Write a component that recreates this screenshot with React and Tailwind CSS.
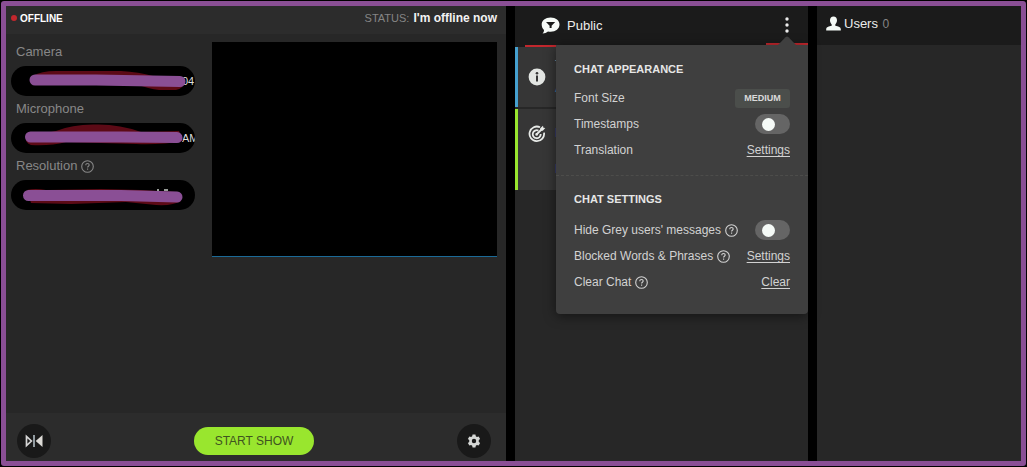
import { useState } from "react"

const messages = [
    {
        id: 'info', icon: InfoIcon, box: 'border-[#45a0cf] h-[60px] pt-[11px]',
        lines: [
            { text: 'T', style: 'text-[#a5a5a5] leading-[14px]' },
            { text: 'A', style: 'text-[#2f7fa8] leading-[32px]' },
        ],
    },
    {
        id: 'goal', icon: GoalIcon, box: 'border-[#99e62e] h-[81px] pt-[6px]',
        lines: [
            { text: 'E', style: 'text-[#5c5cae] leading-[36px]' },
            { text: 'E', style: 'text-[#5c5cae] leading-[36px]' },
        ],
    },
]

function HelpIcon() {
    return (
        <svg viewBox="0 0 13 13" className="w-[13px] h-[13px] shrink-0" fill="none" stroke="currentColor" strokeWidth="1.1">
            <circle cx="6.5" cy="6.5" r="5.8" />
            <path d="M4.8 5.2c0-1 .7-1.7 1.7-1.7s1.7.6 1.7 1.5c0 1.2-1.6 1.2-1.6 2.5" />
            <path d="M6.6 8.6v1.2" />
        </svg>
    )
}

function BubbleIcon() {
    return (
        <svg viewBox="0 0 19 17" className="w-[19px] h-[17px]">
            <path fill="#f7fbf8" d="M9.6.5C14.8.5 18.5 3.4 18.5 7.6s-3.700 7.200-8.900 7.200c-.9 0-1.800-.1-2.600-.3-1.400 1.200-3.300 1.900-5.500 1.900 1-.9 1.500-2.200 1.500-3.500C1.400 11.500.7 9.700.7 7.600.7 3.400 4.400.5 9.600.5z" />
            <path fill="#1b1b1b" d="M5 5h9.200l-3.600 3.700v2.300h-2V8.700z" />
        </svg>
    )
}

function InfoIcon() {
    return (
        <svg viewBox="0 0 18 18" className="w-[18px] h-[18px]">
            <circle cx="9" cy="9" r="8.400" fill="#e2e5e2" />
            <circle cx="9" cy="5.300" r="1.300" fill="#363636" />
            <path d="M8 7.600h2v5.800H8z" fill="#363636" />
        </svg>
    )
}

function GoalIcon() {
    return (
        <svg viewBox="0 0 18 18" className="w-[18px] h-[18px]" fill="none" stroke="#e8ebe8" strokeWidth="1.800">
            <path d="M12 2.300A7.300 7.300 0 1 0 16 7.600" />
            <path d="M10.400 5.600A4 4 0 1 0 12.700 9" />
            <path d="M8.500 9.500L13.500 4.500" />
            <path d="M12.200 5.700V3.200L15 .8l.4 1.900 1.900.4-2.500 2.700z" fill="#e8ebe8" stroke="none" />
            <circle cx="8.600" cy="9.400" r="1.300" fill="#e8ebe8" stroke="none" />
        </svg>
    )
}

function UserIcon() {
    return (
        <svg viewBox="0 0 15 15" className="w-[15px] h-[15px]" fill="#f4f9f5">
            <path d="M7.500.5c2.200 0 3.500 1.500 3.500 3.800 0 1.700-.7 3.200-1.700 4.100v1.300c2.900.6 5.500 1.400 5.500 3.300v1.500H.2V13c0-1.900 2.600-2.700 5.500-3.300V8.400C4.700 7.500 4 6 4 4.300 4 2 5.300.5 7.500.5z" />
        </svg>
    )
}

function FlipIcon() {
    return (
        <svg viewBox="0 0 18 14" className="w-[18px] h-[14px]">
            <path d="M1.500 2.400v9.200L6.400 7z" fill="none" stroke="#d6d6d6" strokeWidth="1.700" />
            <path d="M9 1v12" stroke="#a9b4ba" strokeWidth="1.700" />
            <path d="M17.500 1v12L10.700 7z" fill="#dcdad6" />
        </svg>
    )
}

function GearIcon() {
    return (
        <svg viewBox="0 0 24 24" className="w-[14px] h-[14px]" fill="#d5d7d5">
            <path fillRule="evenodd" d="M9.500 1h5l.6 3 1.900 1.100 3-1 2.500 4.300-2.300 2v3.200l2.300 2-2.500 4.300-3-1-1.900 1.100-.6 3h-5l-.6-3L7 18.900l-3 1-2.500-4.300 2.300-2v-3.200l-2.300-2L4 4.100l3 1L8.900 4zM12 8.200a3.800 3.800 0 1 0 0 7.600 3.800 3.800 0 0 0 0-7.600z" />
        </svg>
    )
}

function Device({ id, label, value, help, children }) {
    return (
        <div>
            <label htmlFor={id} className="flex items-center gap-1 pl-[5px] mb-1 text-[13px] leading-5 text-[#878787]">
                {label} {help && <HelpIcon />}
            </label>
            <div className="relative">
                <select id={id} className="block appearance-none w-full h-[30px] pl-[171px] rounded-full bg-black text-[11px] text-[#dddddd]">
                    <option>{value}</option>
                </select>
                <svg viewBox="0 0 184 30" className="absolute inset-0 w-full h-[30px] pointer-events-none">
                    {children}
                </svg>
            </div>
        </div>
    )
}

function Row({ label, help, htmlFor, children }) {
    return (
        <div className="flex items-center justify-between h-[26px]">
            <label htmlFor={htmlFor} className="flex items-center gap-1">
                {label} {help && <HelpIcon />}
            </label>
            {children}
        </div>
    )
}

function Toggle({ id, checked, onChange }) {
    return (
        <input
            id={id}
            type="checkbox"
            checked={checked}
            onChange={(e) => onChange(e.target.checked)}
            className="appearance-none flex items-center w-[35px] h-5 px-[7px] rounded-full bg-[#656565] checked:justify-end before:content-[''] before:w-[13px] before:h-[13px] before:rounded-full before:bg-[#f5faf7]"
        />
    )
}

function ChatMenu() {

    const [timestamps, setTimestamps] = useState(false)
    const [hideGrey, setHideGrey] = useState(false)

    return (
        <div className="absolute right-0 top-[39px] z-10 w-[252px] rounded-b-sm bg-[#3f3f3f] text-xs text-[#d2d2d2] shadow-[0_2px_12px_rgba(0,0,0,0.5)]">
            <svg viewBox="0 0 20 10" className="absolute right-[11px] -top-[9px] w-5 h-[10px]" fill="#3f3f3f">
                <path d="M0 10 8.500 1.200Q10-.3 11.500 1.200L20 10z" />
            </svg>
            <section className="px-[18px] pt-[14px] pb-3 border-b border-dashed border-[#4d4d4b]">
                <h2 className="mb-[6px] text-[11px] leading-5 font-bold text-[#e6e6e6]">CHAT APPEARANCE</h2>
                <Row label="Font Size" htmlFor="font-size">
                    <button id="font-size" className="w-[55px] h-[19px] rounded-[3px] bg-[#4b4e4b] text-[9px] font-bold text-[#dadada]">MEDIUM</button>
                </Row>
                <Row label="Timestamps" htmlFor="timestamps">
                    <Toggle id="timestamps" checked={timestamps} onChange={setTimestamps} />
                </Row>
                <Row label="Translation">
                    <a href="#translation" className="underline underline-offset-2">Settings</a>
                </Row>
            </section>
            <section className="px-[18px] pt-[13px] pb-[19px]">
                <h2 className="mb-2 text-[11px] leading-5 font-bold text-[#e6e6e6]">CHAT SETTINGS</h2>
                <Row label="Hide Grey users' messages" htmlFor="hide-grey" help>
                    <Toggle id="hide-grey" checked={hideGrey} onChange={setHideGrey} />
                </Row>
                <Row label="Blocked Words & Phrases" help>
                    <a href="#blocked" className="underline underline-offset-2">Settings</a>
                </Row>
                <Row label="Clear Chat" help>
                    <a href="#clear" className="underline underline-offset-2">Clear</a>
                </Row>
            </section>
        </div>
    )
}

export default function App() {
    return (
        <div className="min-h-screen flex p-px bg-black font-['Liberation_Sans',Arial,sans-serif]">
            <div className="flex-1 grid grid-cols-[500fr_293fr_204fr] gap-[9px] border-[5px] border-[#8a4f95] rounded-[3px]">

                {/* Broadcast */}
                <main className="flex flex-col min-w-0 bg-[#272727]">
                    <header className="flex items-center justify-between h-7 pl-[5px] pr-[9px] pb-1 bg-[#2c2c2c] text-[11px]">
                        <div className="flex items-center gap-[3px] text-[10px] font-bold text-white">
                            <span className="w-[6px] h-[6px] rounded-full bg-[#c2272d]" />
                            OFFLINE
                        </div>
                        <p className="text-[#858585]">STATUS: <b className="ml-px text-xs text-[#f2f2f2]">I'm offline now</b></p>
                    </header>

                    <div className="flex-1 flex items-start gap-[17px] pt-2 pl-[5px] pr-[9px]">
                        <form className="flex flex-col gap-[3px] w-[184px] shrink-0">
                            <Device id="camera" label="Camera" value="04">
                                <path d="M22 10Q30 5 45 5H110Q128 6 142 10L172 14Q174 22 165 24H148Q138 23 125 18L50 16z" fill="#5c0a16" />
                                <path d="M24 14 85 14 169 15.500" fill="none" stroke="#8a4f95" strokeWidth="11" strokeLinecap="round" />
                            </Device>
                            <Device id="microphone" label="Microphone" value="AM">
                                <path d="M15 14 45 8Q62 1 85 1.500 108 1 130 9L168 8 172 18Q150 22 125 21L55 19Q40 23 20 22 14 20 15 14z" fill="#5c0a16" />
                                <path d="M19.500 14H110L166 14.500" fill="none" stroke="#8a4f95" strokeWidth="11" strokeLinecap="round" />
                            </Device>
                            <Device id="resolution" label="Resolution" value="" help>
                                <path d="M16 10Q24 8 35 10L90 9 130 10 165 12 170 21Q162 26 145 25L115 22 60 24 20 23z" fill="#5c0a16" />
                                <path d="M146 10h2M153 10h4" stroke="#c9cfc9" strokeWidth="1.500" />
                                <path d="M17.500 15.500H110L166 17" fill="none" stroke="#8a4f95" strokeWidth="11" strokeLinecap="round" />
                            </Device>
                        </form>
                        <div className="flex-1 border-b border-[#1b6a97]">
                            <div className="aspect-[4/3] bg-black" />
                        </div>
                    </div>

                    <footer className="flex items-center justify-between h-12 pl-[11px] pr-[15px] pt-[7px] bg-[#2c2c2c]">
                        <button aria-label="Flip video" className="flex items-center justify-center w-[34px] h-[34px] rounded-full bg-[#191919]"><FlipIcon /></button>
                        <button className="w-[120px] h-7 rounded-full bg-[#99e62e] text-xs text-[#3f5420]">START SHOW</button>
                        <button aria-label="Settings" className="flex items-center justify-center w-[34px] h-[34px] rounded-full bg-[#191919]"><GearIcon /></button>
                    </footer>
                </main>

                {/* Chat */}
                <section className="min-w-0 bg-[#272727]">
                    <header className="relative flex justify-between h-[41px] bg-[#1b1b1b]">
                        <button className="flex items-center gap-[7px] ml-[10px] pl-4 pr-3 border-b-2 border-[#c2272d] text-[13px] text-[#ececec]">
                            <BubbleIcon /> Public
                        </button>
                        <button aria-label="Chat menu" className="flex items-center justify-center w-[42px] h-[39px] border-b-2 border-[#c2272d]">
                            <svg viewBox="0 0 4 16" className="w-1 h-4" fill="#ececec">
                                <circle cx="2" cy="2" r="1.700" />
                                <circle cx="2" cy="8" r="1.700" />
                                <circle cx="2" cy="14" r="1.700" />
                            </svg>
                        </button>
                        <ChatMenu />
                    </header>
                    <div className="flex flex-col gap-[2px]">
                        {messages.map((message) => (
                            <div key={message.id} className={`flex gap-2 pl-[10px] border-l-[3px] bg-[#363636] ${message.box}`}>
                                <div className="flex items-start w-[19px] pt-[10px]"><message.icon /></div>
                                <div className="text-xs">
                                    {message.lines.map((line, index) => (
                                        <p key={index} className={line.style}>{line.text}</p>
                                    ))}
                                </div>
                            </div>
                        ))}
                    </div>
                </section>

                {/* Users */}
                <aside className="min-w-0 bg-[#272727]">
                    <header className="flex items-center gap-[3px] h-[39px] pl-[9px] pb-1 bg-[#1b1b1b] text-[13px] text-[#ececec]">
                        <UserIcon />
                        <h2>Users <span className="ml-px text-xs text-[#858585]">0</span></h2>
                    </header>
                </aside>
            </div>
        </div>
    )
}
